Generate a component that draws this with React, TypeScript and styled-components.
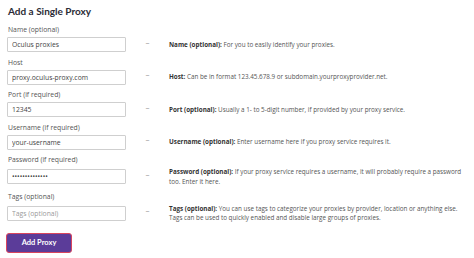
import React from 'react';
import styled, { createGlobalStyle } from 'styled-components';

const GlobalStyle = createGlobalStyle`
  body {
    margin: 0;
    background: #ffffff;
    font-family: "Open Sans", "Liberation Sans", sans-serif;
  }
`;

const Page = styled.div`
  padding: 5px 0 0 7px;
  width: 474px;
  height: 258px;
  box-sizing: border-box;
  overflow: hidden;
`;

const Title = styled.h2`
  margin: 0 0 7px 1px;
  font-family: Lato, "Open Sans", sans-serif;
  font-size: 10px;
  line-height: 13px;
  font-weight: 700;
  color: #2b2b36;
`;

const Field = styled.div`
  margin-bottom: 5.5px;
`;

const Label = styled.label`
  display: block;
  margin: 0 0 3px 1px;
  font-size: 6.8px;
  line-height: 9px;
  color: #555;
`;

const Row = styled.div`
  display: grid;
  grid-template-columns: 119px 43px 1fr;
  align-items: center;
`;

const Input = styled.input`
  box-sizing: border-box;
  width: 119px;
  height: 15px;
  margin: 0;
  padding: 0 4px;
  border: 1px solid #cfcfcf;
  border-radius: 1px;
  font-family: "Open Sans", "Liberation Sans", sans-serif;
  font-size: 6.8px;
  color: #444;
  background: #fff;
  outline: none;
  &::placeholder {
    color: #9a9a9a;
  }
`;

const Tilde = styled.span`
  text-align: center;
  font-size: 7px;
  color: #888;
  margin-top: -3px;
`;

const Desc = styled.p`
  margin: 0;
  max-width: 296px;
  font-size: 6.3px;
  line-height: 9.5px;
  color: #555;
  b {
    color: #333;
    font-weight: 700;
  }
`;

const SubmitButton = styled.button`
  margin: 4px 0 0 -1px;
  width: 66px;
  height: 20px;
  box-sizing: border-box;
  border: 1.5px solid #d9455e;
  border-radius: 3px;
  background: #5b3c99;
  color: #fff;
  font-family: Lato, "Open Sans", sans-serif;
  font-weight: 700;
  font-size: 7.5px;
  cursor: pointer;
`;

type FieldData = {
  label: string;
  value?: string;
  placeholder?: string;
  type?: string;
  term: string;
  text: string;
};

const fields: FieldData[] = [
  {
    label: 'Name (optional)',
    value: 'Oculus proxies',
    term: 'Name (optional):',
    text: 'For you to easily identify your proxies.',
  },
  {
    label: 'Host',
    value: 'proxy.oculus-proxy.com',
    term: 'Host:',
    text: 'Can be in format 123.45.678.9 or subdomain.yourproxyprovider.net.',
  },
  {
    label: 'Port (if required)',
    value: '12345',
    term: 'Port (optional):',
    text: 'Usually a 1- to 5-digit number, if provided by your proxy service.',
  },
  {
    label: 'Username (if required)',
    value: 'your-username',
    term: 'Username (optional):',
    text: 'Enter username here if you proxy service requires it.',
  },
  {
    label: 'Password (if required)',
    value: 'passwordpasswo',
    type: 'password',
    term: 'Password (optional):',
    text: 'If your proxy service requires a username, it will probably require a password too. Enter it here.',
  },
  {
    label: 'Tags (optional)',
    placeholder: 'Tags (optional)',
    term: 'Tags (optional):',
    text: 'You can use tags to categorize your proxies by provider, location or anything else. Tags can be used to quickly enabled and disable large groups of proxies.',
  },
];

function App() {
  return (
    <Page>
      <GlobalStyle />
      <Title>Add a Single Proxy</Title>
      {fields.map(f => (
        <Field key={f.label}>
          <Label>{f.label}</Label>
          <Row>
            <Input
              type={f.type || 'text'}
              defaultValue={f.value}
              placeholder={f.placeholder}
            />
            <Tilde>~</Tilde>
            <Desc>
              <b>{f.term}</b> {f.text}
            </Desc>
          </Row>
        </Field>
      ))}
      <SubmitButton>Add Proxy</SubmitButton>
    </Page>
  );
}

export default App;
